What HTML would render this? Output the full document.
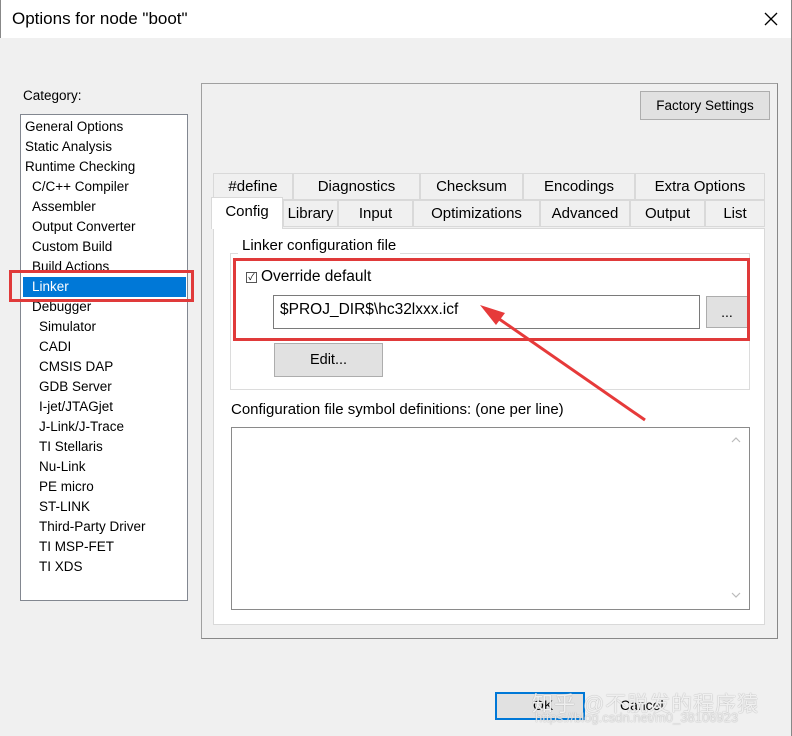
<!DOCTYPE html>
<html><head><meta charset="utf-8"><style>
*{margin:0;padding:0;box-sizing:border-box}
body{width:792px;height:736px;background:#f0f0f0;font-family:"Liberation Sans","Noto Sans CJK SC",sans-serif;font-size:14px;color:#000;position:relative;overflow:hidden}
.a{position:absolute}
.title{left:0;top:0;width:792px;height:38px;background:#fff;border-left:1px solid #888}
.title span{position:absolute;left:11px;top:9px;font-size:17px}
.list{left:20px;top:114px;width:168px;height:487px;background:#fff;border:1px solid #828790}
.it{position:absolute;left:4px;font-size:13.5px;line-height:20px;white-space:nowrap}
.tab{position:absolute;height:27px;border:1px solid #d9d9d9;background:#f0f0f0;text-align:center;line-height:26px;font-size:15px}
.btn{position:absolute;background:#e1e1e1;border:1px solid #adadad;text-align:center;font-size:14px}
</style></head><body>
<div class="a title"><span>Options for node "boot"</span>
<svg class="a" style="left:763px;top:12px" width="14" height="14"><path d="M1 1L13 13M13 1L1 13" stroke="#000" stroke-width="1.3"/></svg></div>
<div class="a" style="left:23px;top:88px;font-size:13.5px">Category:</div>
<div class="a list">
<div class="it" style="top:2px">General Options</div>
<div class="it" style="top:22px">Static Analysis</div>
<div class="it" style="top:42px">Runtime Checking</div>
<div class="it" style="top:62px;left:11px">C/C++ Compiler</div>
<div class="it" style="top:82px;left:11px">Assembler</div>
<div class="it" style="top:102px;left:11px">Output Converter</div>
<div class="it" style="top:122px;left:11px">Custom Build</div>
<div class="it" style="top:142px;left:11px">Build Actions</div>
<div style="position:absolute;left:2px;top:162px;width:163px;height:20px;background:#0078d7"></div>
<div class="it" style="top:162px;left:11px;color:#fff">Linker</div>
<div class="it" style="top:182px;left:11px">Debugger</div>
<div class="it" style="top:202px;left:18px">Simulator</div>
<div class="it" style="top:222px;left:18px">CADI</div>
<div class="it" style="top:242px;left:18px">CMSIS DAP</div>
<div class="it" style="top:262px;left:18px">GDB Server</div>
<div class="it" style="top:282px;left:18px">I-jet/JTAGjet</div>
<div class="it" style="top:302px;left:18px">J-Link/J-Trace</div>
<div class="it" style="top:322px;left:18px">TI Stellaris</div>
<div class="it" style="top:342px;left:18px">Nu-Link</div>
<div class="it" style="top:362px;left:18px">PE micro</div>
<div class="it" style="top:382px;left:18px">ST-LINK</div>
<div class="it" style="top:402px;left:18px">Third-Party Driver</div>
<div class="it" style="top:422px;left:18px">TI MSP-FET</div>
<div class="it" style="top:442px;left:18px">TI XDS</div>
</div>
<div class="a" style="left:9px;top:270px;width:185px;height:32px;border:3px solid #e03a3a"></div>

<div class="a" style="left:201px;top:83px;width:577px;height:556px;border:1px solid #a0a0a0;border-right-color:#888;border-bottom-color:#888"></div>
<div class="btn" style="left:640px;top:91px;width:130px;height:29px;line-height:27px;font-size:13.5px">Factory Settings</div>

<div class="a" style="left:213px;top:228px;width:552px;height:397px;background:#fff;border:1px solid #d9d9d9"></div>
<div class="tab" style="left:213px;top:173px;width:80px">#define</div>
<div class="tab" style="left:293px;top:173px;width:127px">Diagnostics</div>
<div class="tab" style="left:420px;top:173px;width:103px">Checksum</div>
<div class="tab" style="left:523px;top:173px;width:112px">Encodings</div>
<div class="tab" style="left:635px;top:173px;width:130px">Extra Options</div>
<div class="tab" style="left:283px;top:200px;width:55px">Library</div>
<div class="tab" style="left:338px;top:200px;width:75px">Input</div>
<div class="tab" style="left:413px;top:200px;width:127px">Optimizations</div>
<div class="tab" style="left:540px;top:200px;width:90px">Advanced</div>
<div class="tab" style="left:630px;top:200px;width:75px">Output</div>
<div class="tab" style="left:705px;top:200px;width:60px">List</div>
<div class="tab" style="left:211px;top:197px;width:72px;height:32px;background:#fff;border-bottom:none;line-height:28px">Config</div>

<div class="a" style="left:230px;top:253px;width:520px;height:137px;border:1px solid #dcdcdc"></div>
<div class="a" style="left:238px;top:237px;background:#fff;padding:0 4px;font-size:15px">Linker configuration file</div>
<div class="a" style="left:246px;top:272px;width:11px;height:11px;border:1px solid #555;font-size:9px;line-height:9px;text-align:center">✓</div>
<div class="a" style="left:261px;top:268px;font-size:15.5px">Override default</div>
<div class="a" style="left:273px;top:295px;width:427px;height:34px;border:1px solid #7a7a7a;background:#fff;padding:5px 6px;font-size:15.5px">$PROJ_DIR$\hc32lxxx.icf</div>
<div class="btn" style="left:706px;top:296px;width:42px;height:32px;line-height:30px">...</div>
<div class="btn" style="left:274px;top:343px;width:109px;height:34px;line-height:32px;font-size:14.5px">Edit...</div>
<div class="a" style="left:233px;top:258px;width:517px;height:83px;border:3px solid #e03a3a"></div>

<div class="a" style="left:231px;top:401px;font-size:15px">Configuration file symbol definitions: (one per line)</div>
<div class="a" style="left:231px;top:427px;width:519px;height:183px;border:1px solid #8a8a8a;background:#fff"></div>
<svg class="a" style="left:730px;top:433px" width="12" height="170"><path d="M2 9L6 5L10 9M2 160L6 164L10 160" stroke="#bbb" fill="none" stroke-width="1.2"/></svg>

<svg class="a" style="left:0;top:0" width="792" height="736">
<path d="M645 420L492 314" stroke="#e63a3a" stroke-width="3"/>
<path d="M480 305L505 313L496 325Z" fill="#e63a3a"/>
</svg>

<div class="btn" style="left:495px;top:692px;width:90px;height:28px;border:2px solid #0078d7"></div>
<div class="a" style="left:533px;top:697px;font-size:14px">OK</div>
<div class="a" style="left:620px;top:697px;font-size:14px">Cancel</div>
<div class="a" style="left:532px;top:688px;font-size:21px;color:rgba(255,255,255,.85);text-shadow:0 0 1px #888;letter-spacing:1px">知乎 @不脱发的程序猿</div>
<div class="a" style="left:535px;top:710px;font-size:13px;color:rgba(255,255,255,.7);text-shadow:0 0 1px #999">https://blog.csdn.net/m0_38106923</div>
<div class="a" style="left:791px;top:0;width:1px;height:736px;background:#888"></div>
</body></html>
